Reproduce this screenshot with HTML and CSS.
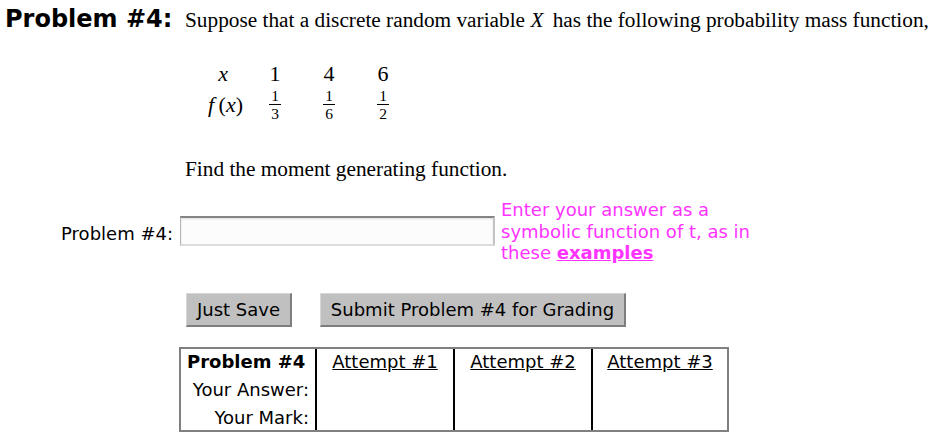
FILE: index.html
```html
<!DOCTYPE html>
<html>
<head>
<meta charset="utf-8">
<link rel="stylesheet" href="styles.css">
</head>
<body>
<div class="problem">
  <h1 class="heading">Problem #4:</h1>
  <p class="statement">Suppose that a discrete random variable <i class="var">X</i> has the following probability mass function,</p>

  <div class="pmf">
    <div class="pmf-label pmf-x"><i>x</i></div>
    <div class="pmf-val">1</div>
    <div class="pmf-val">4</div>
    <div class="pmf-val">6</div>
    <div class="pmf-label pmf-f"><i>f</i>&#8201;(<i>x</i>)</div>
    <div class="pmf-val"><span class="frac"><span class="num">1</span><span class="den">3</span></span></div>
    <div class="pmf-val"><span class="frac"><span class="num">1</span><span class="den">6</span></span></div>
    <div class="pmf-val"><span class="frac"><span class="num">1</span><span class="den">2</span></span></div>
  </div>

  <p class="question">Find the moment generating function.</p>

  <label class="answer-label" for="ans">Problem #4:</label>
  <div class="answer-field">
    <input id="ans" class="answer-input" type="text">
    <div class="hint">Enter your answer as a<br>symbolic function of t, as in<br>these <a class="hint-link" href="#">examples</a></div>
  </div>

  <div class="buttons">
    <button class="btn btn-save" type="button">Just Save</button>
    <button class="btn btn-submit" type="button">Submit Problem #4 for Grading</button>
  </div>

  <table class="attempts">
    <tr>
      <th class="c1 title">Problem #4</th>
      <td class="c2 att"><a href="#">Attempt #1</a></td>
      <td class="c3 att"><a href="#">Attempt #2</a></td>
      <td class="c4 att"><a href="#">Attempt #3</a></td>
    </tr>
    <tr>
      <th class="c1 rowlabel">Your Answer:</th>
      <td class="c2"></td>
      <td class="c3"></td>
      <td class="c4"></td>
    </tr>
    <tr class="last">
      <th class="c1 rowlabel">Your Mark:</th>
      <td class="c2"></td>
      <td class="c3"></td>
      <td class="c4"></td>
    </tr>
  </table>
</div>
</body>
</html>
```

FILE: styles.css
```css
html, body {
  margin: 0;
  padding: 0;
  background: #fff;
  color: #000;
}

body {
  font-family: "DejaVu Sans", Verdana, sans-serif;
  font-size: 18px;
}

.problem {
  display: grid;
  grid-template-columns: 179px 1fr;
  padding-top: 5px;
}

.heading {
  grid-column: 1;
  grid-row: 1;
  align-self: baseline;
  margin: 0;
  padding-left: 5px;
  font-size: 24px;
  line-height: 28px;
  font-weight: bold;
  white-space: nowrap;
}

.statement {
  grid-column: 2;
  grid-row: 1;
  align-self: baseline;
  margin: 0;
  padding-left: 6px;
  font-family: "Liberation Serif", "Times New Roman", serif;
  font-size: 21.3px;
  line-height: 28px;
  white-space: nowrap;
}

.var {
  margin-right: 4px;
}

.pmf {
  grid-column: 2;
  display: grid;
  grid-template-columns: 69px 54px 54px 54px;
  grid-template-rows: 24px 35px;
  row-gap: 1px;
  align-items: center;
  margin-top: 28px;
  font-family: "Liberation Serif", "Times New Roman", serif;
  font-size: 22px;
  line-height: 24px;
}

.pmf-label {
  text-align: right;
}

.pmf-x {
  padding-right: 20px;
}

.pmf-f {
  padding-right: 5px;
}

.pmf-val {
  text-align: center;
}

.frac {
  display: inline-flex;
  flex-direction: column;
  align-items: stretch;
  vertical-align: middle;
  font-size: 15.5px;
  line-height: 17px;
}

.num {
  padding: 0 2px;
  border-bottom: 1px solid #000;
}

.den {
  padding: 0 2px;
}

.question {
  grid-column: 2;
  margin: 35px 0 0;
  padding-left: 6px;
  font-family: "Liberation Serif", "Times New Roman", serif;
  font-size: 21.3px;
  line-height: 24px;
}

.answer-label {
  grid-column: 1;
  align-self: center;
  margin-top: 22px;
  padding-right: 6px;
  text-align: right;
  line-height: 21px;
}

.answer-field {
  grid-column: 2;
  display: flex;
  align-items: center;
  gap: 6px;
  margin-top: 18px;
}

.answer-input {
  box-sizing: border-box;
  width: 315px;
  height: 30px;
  margin: 0 0 0 1px;
  padding: 2px 4px;
  background: #fcfcfc;
  border-style: solid;
  border-width: 2px 2px 2px 1px;
  border-color: #848484 #c4c4c4 #dcdcdc #b4b4b4;
  box-shadow: inset 0 1px 2px rgba(0, 0, 0, 0.12);
  font-family: "DejaVu Sans", Verdana, sans-serif;
  font-size: 16px;
  outline: none;
}

.hint {
  color: #ff33ff;
  line-height: 21.5px;
  white-space: nowrap;
}

.hint-link {
  color: #ff33ff;
  font-weight: bold;
  text-decoration: underline;
}

.buttons {
  grid-column: 2;
  display: flex;
  gap: 28px;
  margin-top: 29.5px;
  padding-left: 7px;
}

.btn {
  box-sizing: border-box;
  height: 34px;
  margin: 0;
  padding: 0 9px;
  background: #c0c0c0;
  color: #000;
  border-style: solid;
  border-width: 1px 2px 2px 1px;
  border-color: #d6d6d6 #7e7e7e #7e7e7e #d6d6d6;
  border-radius: 0;
  font-family: "DejaVu Sans", Verdana, sans-serif;
  font-size: 18px;
  line-height: 21px;
}

.btn-save {
  width: 106px;
}

.btn-submit {
  width: 306px;
}

.attempts {
  grid-column: 2;
  margin-top: 20px;
  width: 550px;
  table-layout: fixed;
  border-collapse: separate;
  border-spacing: 0;
  border: 2px solid #808080;
}

.attempts th,
.attempts td {
  box-sizing: border-box;
  padding: 2px 6px 5px;
  line-height: 21px;
  font-size: 18px;
  vertical-align: top;
  white-space: nowrap;
}

.attempts .last th,
.attempts .last td {
  padding-bottom: 2px;
}

.c1 { width: 134px; }
.c2 { width: 138px; }
.c3 { width: 138px; }
.c4 { width: 136px; }

.c2, .c3, .c4 {
  border-left: 2px solid #000;
}

.title {
  text-align: left;
  padding-left: 5px;
  font-weight: bold;
}

.rowlabel {
  text-align: right;
  font-weight: normal;
}

.att {
  text-align: center;
}

.att a {
  color: #000;
  text-decoration: underline;
}
```
